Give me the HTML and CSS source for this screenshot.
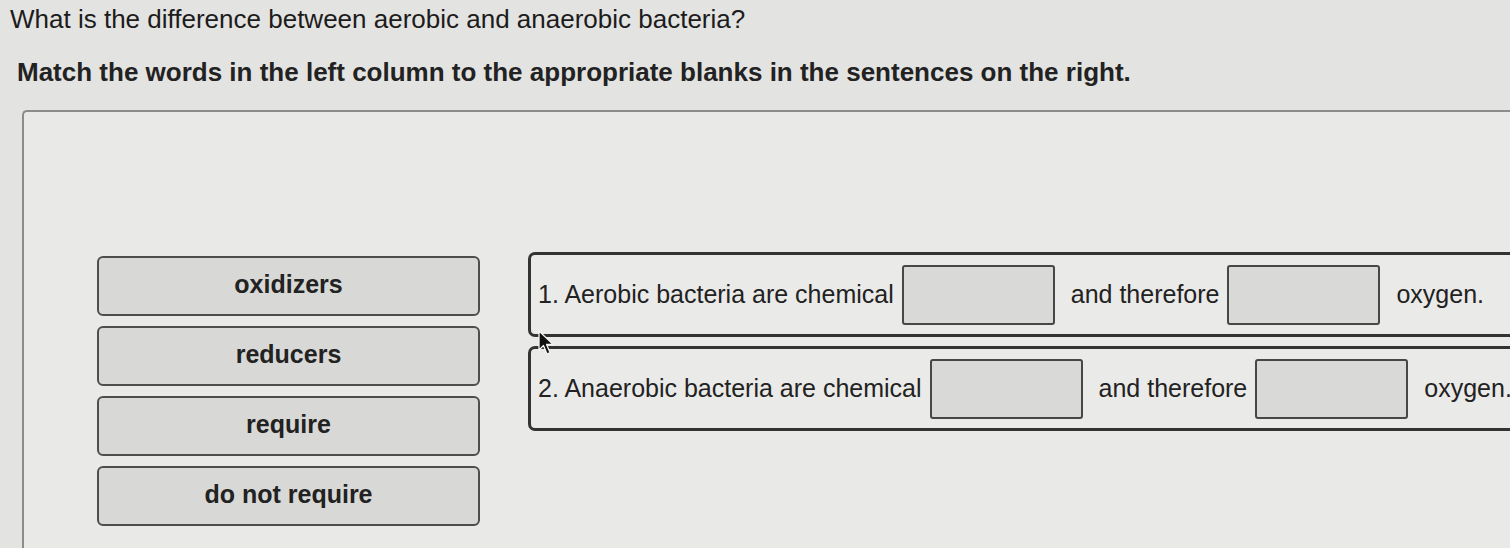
FILE: index.html
```html
<!DOCTYPE html>
<html lang="en">
<head>
    <meta charset="UTF-8">
    <meta name="viewport" content="width=device-width, initial-scale=1.0">
    <title>Aerobic and Anaerobic Bacteria</title>
    <link rel="stylesheet" href="styles.css">
</head>
<body>
    <p class="question">What is the difference between aerobic and anaerobic bacteria?</p>
    <p class="instructions">Match the words in the left column to the appropriate blanks in the sentences on the right.</p>

    <div class="match-area">
        <div class="word-bank">
            <div class="word">oxidizers</div>
            <div class="word">reducers</div>
            <div class="word">require</div>
            <div class="word">do not require</div>
        </div>

        <div class="sentences">
            <div class="sentence">
                <span>1. Aerobic bacteria are chemical</span>
                <span class="blank"></span>
                <span>and therefore</span>
                <span class="blank"></span>
                <span>oxygen.</span>
            </div>
            <div class="sentence">
                <span>2. Anaerobic bacteria are chemical</span>
                <span class="blank"></span>
                <span>and therefore</span>
                <span class="blank"></span>
                <span>oxygen.</span>
            </div>
            <!-- mouse pointer resting between the two rows -->
            <svg class="pointer" width="18" height="26" viewBox="0 0 18 26">
                <path d="M1 1 L1 20 L5.5 15.5 L9 24 L12 22.6 L8.6 14.4 L15 14.4 Z" fill="#111" stroke="#f4f4f4" stroke-width="1.3" stroke-linejoin="round"/>
            </svg>
        </div>
    </div>
</body>
</html>
```

FILE: styles.css
```css
body {
    font-family: "Liberation Sans", Arial, sans-serif;
    margin: 0;
    background: #e3e3e1;
    color: #1c1c1c;
    overflow: hidden;
    height: 548px;
}
.question {
    font-size: 26px;
    line-height: 30px;
    margin: 4px 0 0 10px;
}
.instructions {
    font-size: 26px;
    line-height: 30px;
    font-weight: bold;
    margin: 23px 0 0 17px;
    color: #222;
}
.match-area {
    display: flex;
    gap: 48px;
    margin: 23px 0 0 22px;
    padding: 144px 0 40px 73px;
    width: 1600px;
    background: #e9e9e7;
    border-top: 2px solid #8c8c8a;
    border-left: 2px solid #8c8c8a;
    border-top-left-radius: 5px;
}
.word-bank {
    display: flex;
    flex-direction: column;
    gap: 10px;
    width: 383px;
    flex-shrink: 0;
}
.word {
    height: 52px;
    display: flex;
    align-items: center;
    justify-content: center;
    background: #d8d8d6;
    border: 2px solid #4e4e4e;
    border-radius: 6px;
    font-size: 25px;
    font-weight: bold;
    color: #222;
    padding-bottom: 4px;
}
.sentences {
    position: relative;
    display: flex;
    flex-direction: column;
    gap: 9px;
    margin-top: -4px;
}
.sentence {
    display: flex;
    align-items: center;
    gap: 8px;
    height: 79px;
    padding-left: 7px;
    width: 1100px;
    border: 3px solid #333;
    border-radius: 7px;
    font-size: 25px;
    color: #222;
    background: #eaeae8;
}
.blank {
    width: 149px;
    height: 56px;
    margin: 0 8px 0 0;
    background: #d9d9d7;
    border: 2px solid #474747;
    border-radius: 3px;
}
.pointer {
    position: absolute;
    left: 10px;
    top: 78px;
}
```
